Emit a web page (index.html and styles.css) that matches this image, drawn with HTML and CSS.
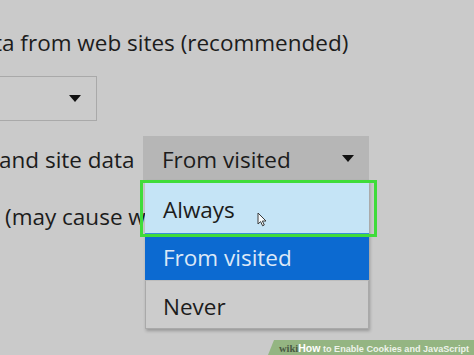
FILE: index.html
```html
<!DOCTYPE html>
<html>
<head>
<meta charset="utf-8">
<link rel="stylesheet" href="styles.css">
</head>
<body>
<div class="page">
  <div class="content">
    <div class="line1">ta from web sites (recommended)</div>
    <div class="select1"><span class="arrow"></span></div>
    <div class="row2">
      <div class="label2">and site data</div>
      <div class="select2"><span class="value">From visited</span><span class="arrow"></span></div>
    </div>
    <div class="line3">(may cause websites to break)</div>
  </div>

  <div class="dropdown">
    <div class="item always">Always</div>
    <div class="item visited">From visited</div>
    <div class="item never">Never</div>
  </div>
  <div class="focus-box"></div>
  <svg class="cursor" width="11" height="15" viewBox="0 0 11 15">
    <path d="M1 1 L1 12 L3.6 9.6 L5.6 13.8 L7.3 13 L5.4 9 L9 9 Z" fill="#f4f9fc" stroke="#3a3a3a" stroke-width="1" stroke-linejoin="round"/>
  </svg>

  <div class="watermark"><span class="wiki">wiki</span><span class="how">How</span> to Enable Cookies and JavaScript</div>
</div>
</body>
</html>
```

FILE: styles.css
```css
html, body {
  margin: 0;
  padding: 0;
}
body {
  background: #cacaca;
  font-family: "Open Sans", "Noto Sans", sans-serif;
  color: #1c1c1c;
}
.page {
  position: relative;
  width: 474px;
  height: 355px;
  overflow: hidden;
  background: #cacaca;
}
.content {
  padding-top: 28px;
}
.line1 {
  font-size: 22.5px;
  line-height: 30px;
  height: 30px;
  margin-left: -6px;
  white-space: nowrap;
}
.select1 {
  margin-top: 18px;
  margin-left: -10px;
  width: 107px;
  height: 45px;
  box-sizing: border-box;
  border: 1px solid #a9a9a9;
  background: #cbcbcb;
  display: flex;
  align-items: center;
  justify-content: flex-end;
  padding-right: 15px;
}
.arrow {
  width: 0;
  height: 0;
  border-left: 6px solid transparent;
  border-right: 6px solid transparent;
  border-top: 7px solid #111;
}
.row2 {
  margin-top: 15px;
  display: flex;
  align-items: center;
  height: 44px;
}
.label2 {
  font-size: 22.5px;
  line-height: 30px;
  width: 144px;
  margin-left: -1px;
  white-space: nowrap;
  padding-top: 4px;
}
.select2 {
  width: 226px;
  height: 44px;
  box-sizing: border-box;
  background: #b6b6b6;
  display: flex;
  align-items: center;
  justify-content: space-between;
  padding-left: 19px;
  padding-right: 15px;
  font-size: 22.5px;
}
.select2 .value {
  padding-top: 2px;
}
.line3 {
  margin-top: 22px;
  margin-left: 5px;
  font-size: 22.5px;
  line-height: 30px;
  white-space: nowrap;
}
.dropdown {
  position: absolute;
  left: 145px;
  top: 180px;
  width: 224px;
  box-shadow: 1px 2px 3px rgba(0,0,0,0.25);
  z-index: 2;
}
.item {
  font-size: 22.5px;
  padding-left: 18px;
  box-sizing: border-box;
  display: flex;
  align-items: center;
}
.always {
  height: 55px;
  background: #c5e4f6;
  border-bottom: 2px solid #3a8fd8;
  padding-top: 5px;
}
.visited {
  height: 45px;
  background: #0c6ad1;
  color: #dce8f7;
}
.never {
  height: 49px;
  background: #cccccc;
  border: 1px solid #a9a9a9;
  border-top: 1px solid #bdbdbd;
  padding-left: 17px;
  padding-top: 3px;
}
.focus-box {
  position: absolute;
  left: 140px;
  top: 180px;
  width: 237px;
  height: 57px;
  box-sizing: border-box;
  border: 3px solid #3fdc3a;
  z-index: 3;
}
.cursor {
  position: absolute;
  left: 257px;
  top: 212px;
  z-index: 4;
}
.watermark {
  position: absolute;
  right: 0;
  bottom: 0;
  width: 206px;
  height: 15px;
  background: #94b582;
  clip-path: polygon(6px 0, 100% 0, 100% 100%, 0 100%);
  font-family: "Liberation Sans", Arial, sans-serif;
  font-weight: bold;
  font-size: 9.1px;
  line-height: 16px;
  color: #eef3ea;
  padding-left: 11px;
  box-sizing: border-box;
  white-space: nowrap;
  z-index: 5;
}
.watermark .wiki {
  font-family: "Liberation Serif", serif;
  color: #4a5a44;
  font-size: 10.5px;
}
.watermark .how {
  color: #ffffff;
  font-size: 10.5px;
}
```
